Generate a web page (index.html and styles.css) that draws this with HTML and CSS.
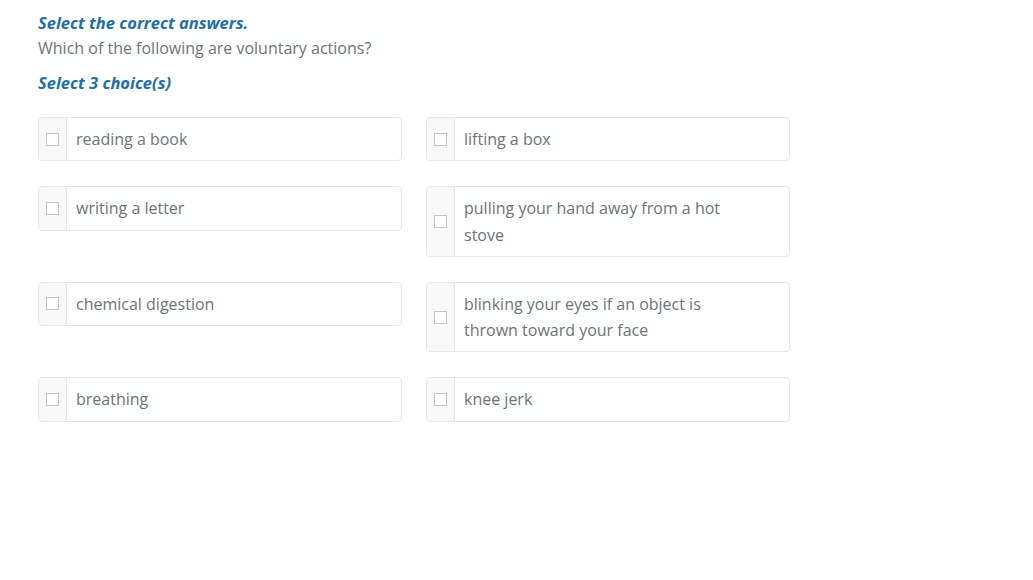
FILE: index.html
```html
<!DOCTYPE html>
<html>
<head>
<meta charset="utf-8">
<link rel="stylesheet" href="styles.css">
</head>
<body>
<div class="quiz">
  <div class="instr">Select the correct answers.</div>
  <div class="question">Which of the following are voluntary actions?</div>
  <div class="count">Select 3 choice(s)</div>
  <div class="choices">
    <div class="choice"><div class="box"><span class="check"></span></div><div class="label">reading a book</div></div>
    <div class="choice"><div class="box"><span class="check"></span></div><div class="label">lifting a box</div></div>
    <div class="choice"><div class="box"><span class="check"></span></div><div class="label">writing a letter</div></div>
    <div class="choice"><div class="box"><span class="check"></span></div><div class="label">pulling your hand away from a hot stove</div></div>
    <div class="choice"><div class="box"><span class="check"></span></div><div class="label">chemical digestion</div></div>
    <div class="choice"><div class="box"><span class="check"></span></div><div class="label">blinking your eyes if an object is thrown toward your face</div></div>
    <div class="choice"><div class="box"><span class="check"></span></div><div class="label">breathing</div></div>
    <div class="choice"><div class="box"><span class="check"></span></div><div class="label">knee jerk</div></div>
  </div>
</div>
</body>
</html>
```
FILE: styles.css
```css
body {
  margin: 0;
  background: #fff;
  font-family: "Open Sans", "Liberation Sans", sans-serif;
}
.quiz {
  padding: 11px 38px;
}
.instr, .count {
  color: #1f6fa8;
  font-weight: 700;
  font-style: italic;
  font-size: 16.5px;
  line-height: 24px;
}
.question {
  color: #6e7378;
  font-size: 16px;
  line-height: 26px;
  margin-bottom: 10px;
}
.count {
  margin-bottom: 22px;
}
.choices {
  display: grid;
  grid-template-columns: 364px 364px;
  column-gap: 24px;
  row-gap: 25px;
  align-items: start;
}
.choice {
  display: flex;
  border: 1px solid #e6e6e6;
  border-radius: 4px;
  overflow: hidden;
}
.box {
  width: 27px;
  background: #f8f8f8;
  border-right: 1px solid #e6e6e6;
  display: flex;
  align-items: center;
  justify-content: center;
}
.check {
  width: 11px;
  height: 11px;
  border: 1px solid #c4c4c4;
  background: #fff;
}
.label {
  padding: 8px 9px;
  color: #6e7378;
  font-size: 16px;
  line-height: 26.25px;
  max-width: 262px;
}
```
